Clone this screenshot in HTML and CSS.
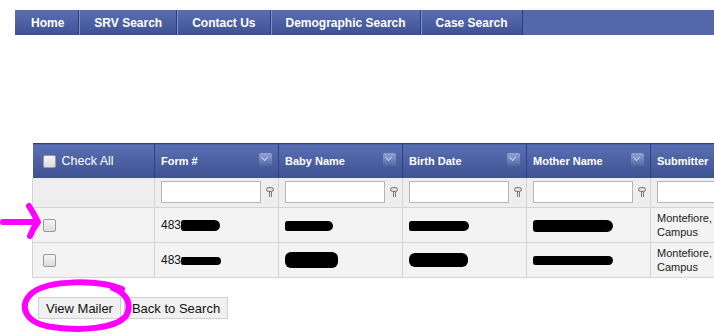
FILE: index.html
```html
<!DOCTYPE html>
<html lang="en">
<head>
    <meta charset="UTF-8">
    <title>Search Results</title>
    <link rel="stylesheet" href="styles.css">
</head>
<body>

<div class="nav">
    <a class="nav-item">Home</a>
    <a class="nav-item">SRV Search</a>
    <a class="nav-item">Contact Us</a>
    <a class="nav-item">Demographic Search</a>
    <a class="nav-item">Case Search</a>
</div>

<div class="content">
    <table class="grid">
        <colgroup>
            <col class="c-check">
            <col class="c-col">
            <col class="c-col">
            <col class="c-col">
            <col class="c-col">
            <col class="c-last">
        </colgroup>
        <thead>
            <tr class="head-row">
                <th class="check-head"><span class="box"></span>Check All</th>
                <th><span class="th-label">Form #</span><span class="menu-btn"></span></th>
                <th><span class="th-label">Baby Name</span><span class="menu-btn"></span></th>
                <th><span class="th-label">Birth Date</span><span class="menu-btn"></span></th>
                <th><span class="th-label">Mother Name</span><span class="menu-btn"></span></th>
                <th><span class="th-label">Submitter</span></th>
            </tr>
            <tr class="filter-row">
                <td></td>
                <td><div class="filter"><input type="text"><span class="funnel"></span></div></td>
                <td><div class="filter"><input type="text"><span class="funnel"></span></div></td>
                <td><div class="filter"><input type="text"><span class="funnel"></span></div></td>
                <td><div class="filter"><input type="text"><span class="funnel"></span></div></td>
                <td><div class="filter"><input type="text"></div></td>
            </tr>
        </thead>
        <tbody>
            <tr class="data-row">
                <td><span class="box small"></span></td>
                <td>483<span class="redact r-form"></span></td>
                <td><span class="redact r-baby"></span></td>
                <td><span class="redact r-date"></span></td>
                <td><span class="redact r-mother"></span></td>
                <td class="sub">Montefiore,<br>Campus</td>
            </tr>
            <tr class="data-row">
                <td><span class="box small"></span></td>
                <td>483<span class="redact r-form2"></span></td>
                <td><span class="redact r-baby2"></span></td>
                <td><span class="redact r-date2"></span></td>
                <td><span class="redact r-mother2"></span></td>
                <td class="sub">Montefiore,<br>Campus</td>
            </tr>
        </tbody>
    </table>

    <div class="actions">
        <button class="btn">View Mailer</button>
        <button class="btn">Back to Search</button>
    </div>
</div>

<!-- hand-drawn marks -->
<svg class="marks" width="714" height="336" viewBox="0 0 714 336">
    <path d="M3 222 L36 222 M29 206 Q34 214 38 222 Q33 228 30 236" fill="none" stroke="#ff00ff" stroke-width="6" stroke-linecap="round" stroke-linejoin="round"/>
    <path d="M122 289 C98 279 48 280 32 293 C18 305 24 323 52 327 C80 331 115 329 126 316 C132 305 128 294 113 288" fill="none" stroke="#ff00ff" stroke-width="6" stroke-linecap="round"/>
</svg>

</body>
</html>
```

FILE: styles.css
```css
html, body {
    margin: 0;
    padding: 0;
    width: 714px;
    height: 336px;
    overflow: hidden;
    background: #fff;
}
body {
    font-family: "Liberation Sans", Arial, sans-serif;
    position: relative;
}
.nav {
    margin: 10px 0 0 15px;
    height: 25px;
    background-color: #5467a9;
    display: flex;
    width: 720px;
}
.nav-item {
    display: flex;
    align-items: center;
    padding: 0 14px;
    color: #fff;
    font-size: 12px;
    font-weight: bold;
    background: linear-gradient(#5a6fb3, #3f5192);
    border-left: 1px solid #7f92cc;
    border-right: 1px solid #2c3c78;
    box-sizing: border-box;
}
.nav-item:first-child {
    border-left: none;
    padding-left: 16px;
}
.content {
    padding: 108px 0 0 32px;
}
.grid {
    border-collapse: collapse;
    table-layout: fixed;
    width: 720px;
}
.c-check { width: 122px; }
.c-col { width: 124px; }
.c-last { width: 102px; }
.head-row th {
    height: 34px;
    padding: 0 6px;
    background: linear-gradient(#5a70b4, #3e5191);
    border-left: 1px solid #2e3f7c;
    border-top: 1px solid #2e3f7c;
    color: #fff;
    font-size: 11px;
    font-weight: bold;
    text-align: left;
    white-space: nowrap;
    position: relative;
    box-sizing: border-box;
}
.head-row th:first-child {
    border-left: none;
}
.check-head {
    font-size: 12.5px !important;
    font-weight: normal !important;
}
.check-head .box {
    margin: 0 6px 0 4px;
}
.th-label {
    display: inline-block;
    vertical-align: middle;
}
.menu-btn {
    position: absolute;
    right: 6px;
    top: 9px;
    width: 13px;
    height: 13px;
    border-radius: 2px;
    background: linear-gradient(#93a3d6, #52669f);
}
.menu-btn::after {
    content: "";
    position: absolute;
    left: 3px;
    top: 2px;
    width: 4px;
    height: 4px;
    border-right: 1.5px solid #c9d3f0;
    border-bottom: 1.5px solid #c9d3f0;
    transform: rotate(45deg);
}
.box {
    display: inline-block;
    vertical-align: middle;
    width: 11px;
    height: 11px;
    border: 1px solid #9a9a9a;
    border-radius: 2px;
    background: linear-gradient(#f4f4f4, #dcdcdc);
}
.filter-row td {
    height: 30px;
    padding: 0 0 0 6px;
    background: #eeeeee;
    border-left: 1px solid #d4d4d4;
    border-bottom: 1px solid #d4d4d4;
    box-sizing: border-box;
}
.filter {
    display: flex;
    align-items: center;
    gap: 4px;
}
.filter input {
    width: 100px;
    height: 22px;
    margin: 0;
    padding: 0;
    border: 1px solid #b5b5b5;
    background: #fff;
    box-sizing: border-box;
}
.funnel {
    width: 8px;
    height: 10px;
    position: relative;
    margin-left: 1px;
}
.funnel::before {
    content: "";
    position: absolute;
    left: 0;
    top: 0;
    width: 6px;
    height: 3px;
    border: 1px solid #777;
    border-radius: 3px;
    background: #ddd;
}
.funnel::after {
    content: "";
    position: absolute;
    left: 3px;
    top: 5px;
    width: 1px;
    height: 5px;
    border-left: 1px solid #777;
    border-right: 1px solid #777;
}
.data-row td {
    height: 35px;
    padding: 0 6px;
    background: #f3f3f3;
    border-left: 1px solid #d4d4d4;
    border-bottom: 1px solid #d4d4d4;
    font-size: 12px;
    color: #111;
    box-sizing: border-box;
    white-space: nowrap;
}
.data-row td:first-child {
    padding-left: 10px;
}
.data-row td.sub {
    font-size: 11px;
    line-height: 14px;
    color: #222;
}
.redact {
    display: inline-block;
    vertical-align: middle;
    background: #000;
    height: 11px;
    border-radius: 3px 6px 6px 3px;
}
.r-form { width: 39px; }
.r-form2 { width: 40px; height: 8px; }
.r-baby { width: 48px; height: 10px; }
.r-baby2 { width: 53px; height: 16px; border-radius: 6px; }
.r-date { width: 60px; height: 10px; }
.r-date2 { width: 59px; height: 14px; border-radius: 6px; }
.r-mother { width: 80px; height: 12px; }
.r-mother2 { width: 80px; height: 9px; }
.actions {
    display: flex;
    gap: 3px;
    padding: 19px 0 0 6px;
}
.btn {
    font-family: "Liberation Sans", Arial, sans-serif;
    font-size: 13px;
    color: #111;
    height: 22px;
    padding: 0 7px;
    margin: 0;
    background: #f0f0f0;
    border: 1px solid #d0d0d0;
    border-radius: 0;
}
.marks {
    position: absolute;
    left: 0;
    top: 0;
    pointer-events: none;
}
```
